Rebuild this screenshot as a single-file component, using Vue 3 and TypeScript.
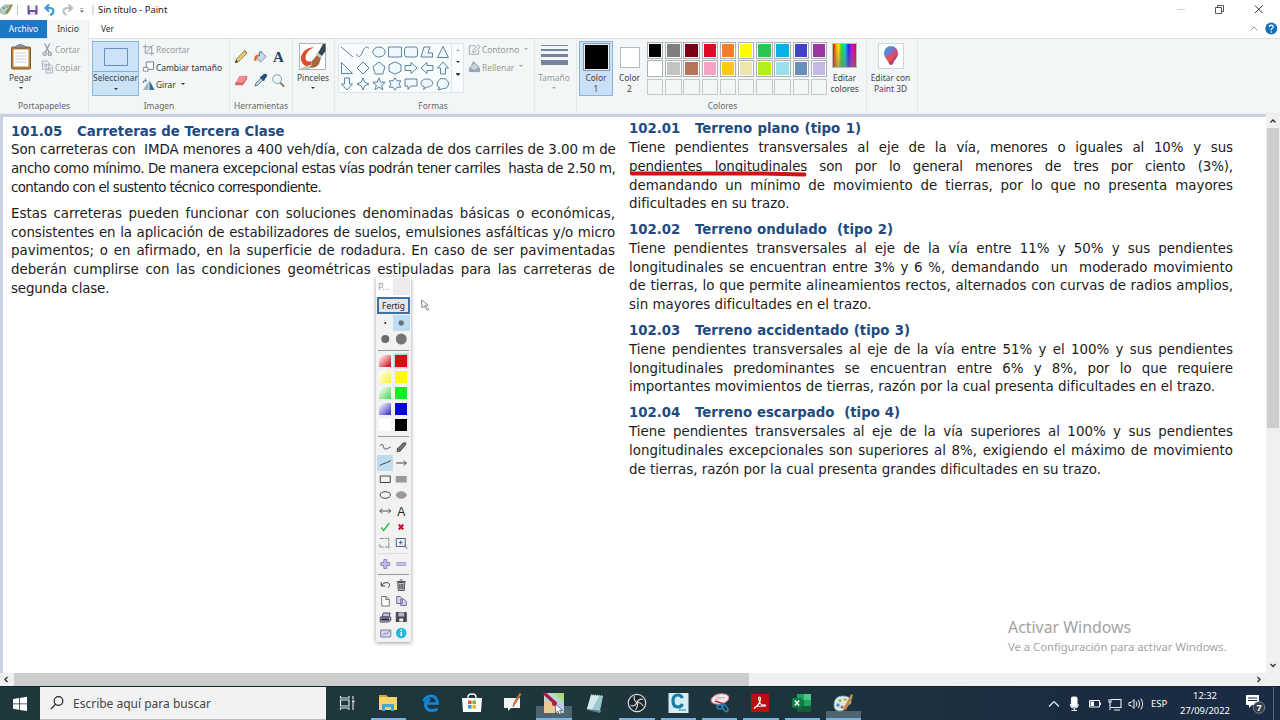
<script setup lang="ts">
interface Line { t: string; w?: number; ls?: number }
interface Section { no?: string; title?: string; tw?: number; lines: Line[] }

const leftSections: Section[] = [
  { no: '101.05', title: 'Carreteras de Tercera Clase', tw: 207, lines: [
    { t: 'Son carreteras con \u00a0IMDA menores a 400 veh/día, con calzada de dos carriles de 3.00 m de', ls: -0.08 },
    { t: 'ancho como mínimo. De manera excepcional estas vías podrán tener carriles \u00a0hasta de 2.50 m,', ls: -0.4 },
    { t: 'contando con el sustento técnico correspondiente.', w: 310, ls: -0.6 },
  ] },
  { lines: [
    { t: 'Estas carreteras pueden funcionar con soluciones denominadas básicas o económicas,' },
    { t: 'consistentes en la aplicación de estabilizadores de suelos, emulsiones asfálticas y/o micro', ls: -0.08 },
    { t: 'pavimentos; o en afirmado, en la superficie de rodadura. En caso de ser pavimentadas' },
    { t: 'deberán cumplirse con las condiciones geométricas estipuladas para las carreteras de' },
    { t: 'segunda clase.', w: 98, ls: -0.15 },
  ] },
]
const rightSections: Section[] = [
  { no: '102.01', title: 'Terreno plano (tipo 1)', tw: 166, lines: [
    { t: 'Tiene pendientes transversales al eje de la vía, menores o iguales al 10% y sus', ls: -0.08 },
    { t: 'pendientes longitudinales son por lo general menores de tres por ciento (3%),', ls: -0.12 },
    { t: 'demandando un mínimo de movimiento de tierras, por lo que no presenta mayores' },
    { t: 'dificultades en su trazo.', w: 160 },
  ] },
  { no: '102.02', title: 'Terreno ondulado \u00a0(tipo 2)', tw: 198, lines: [
    { t: 'Tiene pendientes transversales al eje de la vía entre 11% y 50% y sus pendientes' },
    { t: 'longitudinales se encuentran entre 3% y 6 %, demandando \u00a0un \u00a0moderado movimiento' },
    { t: 'de tierras, lo que permite alineamientos rectos, alternados con curvas de radios amplios,' },
    { t: 'sin mayores dificultades en el trazo.', w: 242 },
  ] },
  { no: '102.03', title: 'Terreno accidentado (tipo 3)', tw: 215, lines: [
    { t: 'Tiene pendientes transversales al eje de la vía entre 51% y el 100% y sus pendientes' },
    { t: 'longitudinales predominantes se encuentran entre 6% y 8%, por lo que requiere' },
    { t: 'importantes movimientos de tierras, razón por la cual presenta dificultades en el trazo.', w: 585 },
  ] },
  { no: '102.04', title: 'Terreno escarpado \u00a0(tipo 4)', tw: 205, lines: [
    { t: 'Tiene pendientes transversales al eje de la vía superiores al 100% y sus pendientes' },
    { t: 'longitudinales excepcionales son superiores al 8%, exigiendo el máximo de movimiento' },
    { t: 'de tierras, razón por la cual presenta grandes dificultades en su trazo.', w: 472 },
  ] },
]
const columns = [
  { cls: 'left', sections: leftSections },
  { cls: 'right', sections: rightSections },
]

const shapes: string[] = [
  'M2 3L14 13', 'M1.500 10C3 14 6 13 7.500 8S12 2 14 4.500', 'M1.800 8a6.200 5 0 1 0 12.400 0a6.200 5 0 1 0-12.400 0', 'M1.500 3h13v10h-13z', 'M4 3h8q2.500 0 2.500 2.500v5q0 2.500-2.500 2.500H4q-2.500 0-2.500-2.500v-5Q1.500 3 4 3z', 'M2 13L5 3h6L9 9h4.500v4z', 'M8 2.500l5.500 11h-11z',
  'M2.500 2.500v11h11z', 'M8 2l6 6-6 6-6-6z', 'M8 2l6 4.800L11.800 14H4.200L2 6.800z', 'M8 1.800l6 3v6.400l-6 3-6-3V4.800z', 'M2 5.500h6V2.500l6 5.500-6 5.500v-3H2z', 'M14 5.500H8V2.500L2 8l6 5.500v-3h6z', 'M5.500 14V8H2.500L8 2l5.500 6h-3v6z',
  'M5.500 2v6H2.500L8 14l5.500-6h-3V2z', 'M8 2l1.800 4.200L14 8l-4.200 1.800L8 14l-1.800-4.200L2 8l4.200-1.800z', 'M8 1.800l1.700 4.300 4.500.2-3.500 2.900 1.200 4.500L8 11.200l-3.900 2.500 1.200-4.500-3.500-2.900 4.500-.2z', 'M8 1.800l1.900 3h3.900L12 8l1.800 3.200H9.900l-1.900 3-1.900-3H2.200L4 8 2.200 4.800h3.900z', 'M2 3h12v7H8l-3 3.500V10H2z', 'M5.500 11C0 9.500 1 3 8 3s8 8 0 8L4.500 13.500z', 'M4 4.500Q5 1.500 8 2.800Q11 1.500 12 4.500Q15.500 7 13 10Q12 13 8.500 12.500L3 14L4.500 11.500Q1 11 2.500 8Q1 6 4 4.500z',
]

const palette: string[] = [
  '#000000', '#7f7f7f', '#790014', '#dc0a26', '#f67d28', '#fffb04', '#2cc551', '#0eade2', '#3f43c4', '#9b36a1',
  '#ffffff', '#c3c3c3', '#b47556', '#f4a2c6', '#fbcb13', '#ece5ac', '#b4ee1e', '#98dfe9', '#6b8fbb', '#c5b9e5',
  '', '', '', '', '', '', '', '', '', '',
]

const inks = [
  ['#c9000f', '#dc0a10'], ['#f8f12a', '#fffb00'], ['#3bd94a', '#08f41c'], ['#3128c8', '#0505dd'], ['#ffffff', '#000000'],
]

const tasks = [
  { id: 'view' }, { id: 'folder', run: true }, { id: 'edge' }, { id: 'store' }, { id: 'note' },
  { id: 'ruler', run: true, hot: true }, { id: 'pad' }, { id: 'obs', run: true }, { id: 'civil', run: true },
  { id: 'snip', run: true }, { id: 'pdf', run: true }, { id: 'excel', run: true }, { id: 'paint', run: true, low: true },
]
</script>

<template>
  <div class="screen">
    <header class="titlebar">
      <svg class="quick" width="92" height="20" viewBox="0 0 92 20">
        <path d="M1 8Q4 4 10 5Q12 9 8 13Q3 16 0 12z" fill="#b7cfc9" stroke="#829da3" stroke-width=".7" />
        <path d="M5 13L11 4l2 1-6 9z" fill="#9a8a50" /><circle cx="4" cy="8" r="1" fill="#658f52" /><circle cx="7" cy="7" r="1" fill="#c28967" />
        <path d="M17.500 5v10M93 5v10" stroke="#c4c4c4" />
        <path d="M27.500 5.500h10v9h-10z" fill="#71529a" /><path d="M29.500 5h6v5h-6z" fill="#f4f4fb" /><path d="M30 12h5v3h-5z" fill="#e3dff0" />
        <path d="M49 4.500L45.500 8l3.500 3.500M46 8H50Q54 8.500 53.300 12Q53 14 50 15" fill="none" stroke="#3a9bd0" stroke-width="2.200" />
        <path d="M68.500 4.500L72 8l-3.500 3.500M71.500 8h-4.500Q63 8.500 63.500 12Q64 14 66.500 15" fill="none" stroke="#b9bdc1" stroke-width="2.200" />
        <path d="M80 8.500h3.500" stroke="#999" stroke-width=".8" /><path d="M79.800 10.500h4L81.800 12.500z" fill="#555" />
      </svg>
      <span class="title">Sin título - Paint</span>
      <svg class="winbtns" width="110" height="20" viewBox="0 0 110 20" fill="none">
        <path d="M7 9.500h8" stroke="#ccc" />
        <path d="M45.500 7.500h6v6h-6zM47.500 7.500V5.500h6v6h-2" stroke="#444" stroke-width=".9" />
        <path d="M85 5.500l7.500 7.500M92.500 5.500L85 13" stroke="#333" />
      </svg>
    </header>

    <nav class="tabs">
      <span class="tab file">Archivo</span><span class="tab active">Inicio</span><span class="tab view">Ver</span>
      <svg class="help" width="30" height="18" viewBox="0 0 30 18">
        <path d="M.500 10.500L4 7l3.500 3.500" fill="none" stroke="#999" />
        <circle cx="21.300" cy="8.500" r="6" fill="#1470b8" />
        <path d="M19.300 7Q19.400 5.200 21.300 5.200T23.300 7Q23.200 8 21.300 9V10.200" fill="none" stroke="#fff" stroke-width="1.200" /><circle cx="21.300" cy="12" r=".8" fill="#fff" />
      </svg>
    </nav>

    <section class="ribbon">
      <div class="group g-clip">
        <div class="body">
          <div class="big paste">
            <svg width="24" height="28" viewBox="0 0 24 28">
              <rect x="2.500" y="4" width="19" height="22" rx="1" fill="#b9803b" stroke="#7e5c34" /><path d="M4.500 6.500h15v17h-15z" fill="#fff" />
              <path d="M6 10h11.500M6 13h11.500M6 16h11.500M6 19h11.500" stroke="#c6ccd5" /><path d="M6 5h11.500L15 2.500h-2a1.800 1.500 0 0 0-3.500 0H8z" fill="#8c9298" stroke="#555" stroke-width=".7" />
            </svg>
            <span>Pegar</span><i class="caret"></i>
          </div>
          <div class="rows">
            <div class="row dim">
              <svg width="13" height="14" viewBox="0 0 14 14" fill="none" stroke="#949ba5" stroke-width="1.300"><path d="M4 0l4.500 9M9.500 0L5 9" /><circle cx="4" cy="11" r="1.800" /><circle cx="9.500" cy="11" r="1.800" /></svg>
              <span>Cortar</span>
            </div>
            <div class="row dim">
              <svg width="13" height="14" viewBox="0 0 14 14" fill="#edf1f6" stroke="#a4adbb"><path d="M1.500.500h5l2 2v7h-7zM5.500 4.500h5l2 2v7h-7z" /><path d="M3 4h3M3 6h2M7 8.500h4M7 10.500h4" /></svg>
              <span>Copiar</span>
            </div>
          </div>
        </div>
        <span class="label">Portapapeles</span>
      </div>

      <div class="group g-image">
        <div class="body">
          <div class="big select">
            <svg width="46" height="30" viewBox="0 0 46 30"><path d="M11.500 6.500h23v17h-23z" fill="none" stroke="#6a8ac2" /><path d="M0 29.500h46" stroke="#7db1dd" /></svg>
            <span>Seleccionar</span><i class="caret"></i>
          </div>
          <div class="rows">
            <div class="row dim"><svg width="13" height="14" viewBox="0 0 14 14" fill="none" stroke="#8d97a6"><path d="M3.500 1v9.500H13M1 3.500h9.500V13M4 10L12 1.500" /></svg><span>Recortar</span></div>
            <div class="row"><svg width="13" height="14" viewBox="0 0 14 14"><path d="M4.500 1.500h8v8h-8z" fill="#fff" stroke="#667799" /><path d="M1.500 7.500h5v4h-5z" fill="#fff" stroke="#7c8da8" /></svg><span>Cambiar tamaño</span></div>
            <div class="row"><svg width="13" height="14" viewBox="0 0 14 14"><path d="M7 3v9.500H1z" fill="#9fb2c6" /><path d="M8 2l5.500 10.500H8z" fill="#356d9b" /><path d="M1 5Q1 2 4 2M3 0l2 2-2 2" fill="none" stroke="#3e6a95" /></svg><span>Girar</span><i class="caret"></i></div>
          </div>
        </div>
        <span class="label">Imagen</span>
      </div>

      <div class="group g-tools">
        <div class="body tools">
          <svg viewBox="0 0 16 16"><path d="M1.800 14.200l1-3.700 8.400-8.700 2.800 2.600-8.700 8.600z" fill="#efc96a" stroke="#796641" stroke-width=".8" /><path d="M1.500 14.500l.8-2.500 1.800 1.700zM11 1.800l2.800 2.600" fill="#222" stroke="#555" /></svg>
          <svg viewBox="0 0 16 16"><path d="M8.500 3l5.500 5-6 6-4.500-5z" fill="#c8dcec" stroke="#627f99" stroke-width=".9" /><path d="M1 12Q1 5 8 6.500Q4 7 3.500 13z" fill="#e4672b" /><path d="M7 8V3Q8 1 10 4" fill="none" stroke="#6e7e8e" /></svg>
          <svg viewBox="0 0 16 16"><text x="2" y="14" class="serif-a">A</text></svg>
          <svg viewBox="0 0 16 16"><path d="M6 3.500h8L9.500 12h-8z" fill="#f29195" stroke="#d4686e" stroke-width=".7" /><path d="M1.500 10h8l4.500-6v2.500L9.500 13h-8z" fill="#d9686e" /></svg>
          <svg viewBox="0 0 16 16"><path d="M2 14l1-3 6-6 2 2-6 6z" fill="#bcd7e6" stroke="#5f7381" /><path d="M8 4l4 4M9 5l3-3q2-1 2 1l-3 4z" fill="#27507b" stroke="#27507b" stroke-width="2" /></svg>
          <svg viewBox="0 0 16 16"><circle cx="6.500" cy="6.500" r="4.700" fill="#ecf5fa" stroke="#8698a6" /><path d="M9.800 10.300L14 14.500" stroke="#8e7159" stroke-width="2" /></svg>
        </div>
        <span class="label">Herramientas</span>
      </div>

      <div class="group g-brush">
        <div class="body">
          <div class="big">
            <svg width="28" height="28" viewBox="0 0 28 28"><path d="M.500.500h26v26H.500z" fill="#fff" stroke="#adb2b5" /><path d="M15 4Q3 8 3 15Q3 21 11 21L9 24Q5 22 5 22Q1 18 2 13Q5 5 15 4z" fill="#dd4e2b" /><path d="M15 4Q6 9 6.500 15Q7 20 13 18L12 22Q3 23 2.500 15Q3 6 15 4z" fill="#dd4e2b" /><path d="M1 26Q8 21 13 23L10 26H1z" fill="#c4c7c4" /><path d="M13 18l5-6 4 3-2 6Q16 26 11 24.500Q13 22 13 18z" fill="#a5683c" /><path d="M19 10l5-9h2.500v7L23 13z" fill="#354851" /><path d="M17.500 10.500l5 4" stroke="#c9c7ba" stroke-width="2.500" /></svg>
            <span>Pinceles</span><i class="caret"></i>
          </div>
        </div>
      </div>

      <div class="group g-shapes">
        <div class="body">
          <div class="gallery">
            <div class="shapes">
              <svg v-for="(s, i) in shapes" :key="i" viewBox="0 0 16 16"><path :d="s" :fill="i < 2 ? 'none' : '#eef8fd'" stroke="#426d8c" stroke-width=".85" /></svg>
            </div>
            <div class="scroll3"><i class="up"></i><i class="caret"></i><b><i class="caret"></i></b></div>
          </div>
          <div class="rows">
            <div class="row dim"><svg width="13" height="14" viewBox="0 0 14 14" fill="none" stroke="#9ea5ad"><path d="M8 2.500H1.500v9h10V7M5 9.500l1-3 5.500-5 1.500 2L7.500 9z" /></svg><span>Contorno</span><i class="caret"></i></div>
            <div class="row dim"><svg width="13" height="14" viewBox="0 0 14 14"><path d="M1 8h12v4.500H1z" fill="#98a7bc" /><path d="M6 2l6 5-5 4-5-3z" fill="#cad2df" stroke="#929fb2" /><path d="M5 5Q5-1 8 3" fill="none" stroke="#929fb2" /></svg><span>Rellenar</span><i class="caret"></i></div>
          </div>
        </div>
        <span class="label">Formas</span>
      </div>

      <div class="group g-size">
        <div class="body"><div class="big dim">
          <svg width="28" height="28" viewBox="0 0 28 28" stroke="#7785a3"><path d="M1 4.500h27" /><path d="M1 9h27" stroke-width="2" /><path d="M1 14.500h27" stroke-width="3" /><path d="M1 21.500h27" stroke-width="5" /></svg>
          <span>Tamaño</span><i class="caret"></i>
        </div></div>
      </div>

      <div class="group g-colors">
        <div class="body">
          <div class="big c1"><em class="swatch black"></em><span>Color</span><span>1</span></div>
          <div class="big c2"><em class="swatch white"></em><span>Color</span><span>2</span></div>
          <div class="palette"><i v-for="(c, i) in palette" :key="i" :class="{ empty: !c }" :style="c ? { backgroundColor: c } : undefined"></i></div>
          <div class="big edit"><em class="rainbow"></em><span>Editar</span><span>colores</span></div>
        </div>
        <span class="label">Colores</span>
      </div>

      <div class="group g-3d">
        <div class="body"><div class="big">
          <svg width="26" height="26" viewBox="0 0 26 26">
            <defs><linearGradient id="drop" x1="0" y1="0" x2=".8" y2="1"><stop offset="0" stop-color="#16b1e8" /><stop offset=".4" stop-color="#7776cf" /><stop offset=".65" stop-color="#e64862" /><stop offset="1" stop-color="#5c2aa3" /></linearGradient></defs>
            <path d="M.500.500h25v25H.500z" fill="#fff" stroke="#d3d5d7" /><path d="M13 3a7 7 0 0 1 7 7q0 4-4 8q-1 4-3 4t-3-4q-4-4-4-8a7 7 0 0 1 7-7z" fill="url(#drop)" /><path d="M7 12q6 5 8-2l1 3-3 6h-3z" fill="#ef543d" opacity=".7" />
          </svg>
          <span>Editar con</span><span>Paint 3D</span>
        </div></div>
      </div>
    </section>

    <main class="work">
      <div class="canvas">
        <div v-for="col in columns" :key="col.cls" class="col" :class="col.cls">
          <article v-for="(s, i) in col.sections" :key="i">
            <h2 v-if="s.title"><span class="num">{{ s.no }}</span><span class="just" :style="{ width: s.tw + 'px' }">{{ s.title }}</span></h2>
            <p v-for="l in s.lines" :key="l.t" class="just" :style="{ width: (l.w ?? 604) + 'px', letterSpacing: (l.ls ?? 0) + 'px' }">{{ l.t }}</p>
          </article>
        </div>
        <svg class="stroke" width="180" height="8" viewBox="0 0 180 8"><path d="M3 3.500h129L175.500 4.500" fill="none" stroke="#cf1116" stroke-width="4" stroke-linecap="round" stroke-linejoin="round" /></svg>
        <div class="activate"><strong>Activar Windows</strong><span>Ve a Configuración para activar Windows.</span></div>
      </div>
      <div class="vbar">
        <svg width="14" height="14" viewBox="0 0 14 14"><path d="M4.500 8.500L7 6l2.500 2.500" /></svg>
        <div class="thumb"></div>
        <svg width="14" height="14" viewBox="0 0 14 14"><path d="M4.500 5L7 7.500 9.500 5" /></svg>
      </div>
    </main>
    <div class="hbar">
      <svg width="14" height="13" viewBox="0 0 14 13"><path d="M7.500 4L5 6.500 7.500 9" /></svg>
      <div class="thumb"></div>
      <svg width="14" height="13" viewBox="0 0 14 13"><path d="M5.500 4L8 6.500 5.500 9" /></svg>
    </div>

    <footer class="taskbar">
      <div class="start"><svg width="16" height="16" viewBox="0 0 16 16" fill="#fff"><path d="M1 3l6-1v5.500H1zM7.800 1.900L15 .800v6.700H7.800zM1 8.300h6v5.500l-6-1zM7.800 8.300H15v6.700l-7.200-1.100z" /></svg></div>
      <div class="search"><svg width="16" height="16" viewBox="0 0 16 16" fill="none" stroke="#222" stroke-width="1.200"><circle cx="9.500" cy="6" r="4.300" /><path d="M6.500 9.200L2 14" /></svg><span>Escribe aquí para buscar</span></div>
      <div v-for="t in tasks" :key="t.id" class="task" :class="{ run: t.run, hot: t.hot, low: t.low }">
        <svg width="24" height="24" viewBox="0 0 24 24">
          <g v-if="t.id === 'view'" fill="none" stroke="#e8eeee" stroke-width="1.100"><path d="M5.500 9h8.500v6h-8.500zM5.500 5v2h8.500V5M5.500 19v-2h8.500v2M18 5v3.500M18 12v7" /><path d="M17 10.500h2.500" stroke-width="2" /></g>
          <g v-else-if="t.id === 'folder'"><path d="M3 4h7l2 2h9v13H3z" fill="#f5d36c" /><path d="M3 4h7l1 2H3z" fill="#dba82e" /><path d="M6 20v-7h12v7h-3v-4h-6v4z" fill="#4aa5cb" /></g>
          <g v-else-if="t.id === 'edge'"><path d="M5.500 10.500Q8 5 13 5Q18.500 5 19.500 12" fill="none" stroke="#1684d5" stroke-width="3" /><path d="M9 12.500H21" stroke="#1684d5" stroke-width="2.600" /><path d="M12 8Q7.500 10 7.500 14Q8 19.500 14 19.500Q17 19.500 19.500 18" fill="none" stroke="#1684d5" stroke-width="3" /></g>
          <g v-else-if="t.id === 'store'"><path d="M9 8V6q0-3 4-3t4 3v2" fill="none" stroke="#fff" stroke-width="1.300" /><path d="M3 7h20l-1 14H4z" fill="#fff" /><path d="M9 9.500h3.600v3.600H9z" fill="#e9532f" /><path d="M13.400 9.500H17v3.600h-3.600z" fill="#80b53a" /><path d="M9 14h3.600v3.600H9z" fill="#2d9ed8" /><path d="M13.400 14H17v3.600h-3.600z" fill="#f4b81d" /></g>
          <g v-else-if="t.id === 'note'"><path d="M3 7h16v10h-9l-3 3v-3H3z" fill="#f3f5f5" /><path d="M20.500 3L14 13l-2 3 .5-3.500L18.500 2z" fill="#d77b35" stroke="#8b4a2b" stroke-width=".5" /></g>
          <g v-else-if="t.id === 'ruler'"><path d="M2 2h20v20H2z" fill="#b8d9cf" /><path d="M12 2h10v10z" fill="#a8da80" /><path d="M2 9l10 4 1 9H2z" fill="#ebc996" /><path d="M14 12h8v10h-9z" fill="#b9ccef" /><path d="M2 2l11 10" stroke="#a01e47" stroke-width="3.500" /><circle cx="12.500" cy="12.500" r="2.500" fill="#c51535" /><path d="M13.500 13v9l2.300-2 1.500 3.500 2-1-1.600-3h3z" fill="#fff" stroke="#333" stroke-width=".6" /></g>
          <g v-else-if="t.id === 'pad'"><path d="M8 4l12 1-3 15-13-2z" fill="#9ac8ce" /><path d="M8 4l8 1-7 13.500-5-.5z" fill="#d6eaeb" /><path d="M4 18l13 2 2-1-2 3-13-3z" fill="#538894" /><path d="M8 4l12 1" stroke="#bed0ce" stroke-width="1.500" stroke-dasharray="1 1" /></g>
          <g v-else-if="t.id === 'obs'" fill="none" stroke="#dae0e1"><circle cx="12" cy="12" r="8.700" fill="#1b2328" stroke-width="1.200" /><path d="M9.500 5Q8 9 12 11.500Q16 11 18 15M18 8.500Q14 7 12 11.500Q13.500 15 10.500 19M5.500 14.500Q10 16 12 11.500" stroke-width="1.100" /></g>
          <g v-else-if="t.id === 'civil'"><path d="M2.500 2h20v20h-20z" fill="#d6edf6" /><path d="M16.500 7Q15 4 12 4Q7 4 7 10t5 6Q15 16 16.500 13" fill="none" stroke="#197da3" stroke-width="3.200" /><path d="M13 19h7" stroke="#53a5c3" stroke-width="2" stroke-dasharray="1.800 .6" /></g>
          <g v-else-if="t.id === 'snip'"><ellipse cx="12" cy="8" rx="9" ry="5" fill="#f5e7ea" stroke="#dc8088" transform="rotate(-12 12 8)" /><path d="M7 9l9-3M8 6l9 1" stroke="#b7bdc8" /><path d="M7 10l9 3" stroke="#d22540" stroke-width="1.500" /><g fill="none" stroke="#2784b5" stroke-width="1.600"><ellipse cx="12" cy="16" rx="3" ry="2" /><ellipse cx="17" cy="17" rx="2" ry="4" transform="rotate(-35 17 17)" /></g></g>
          <g v-else-if="t.id === 'pdf'"><rect x="2" y="3" width="18" height="18" rx="1" fill="#b90f0f" /><path d="M10.500 6Q12 6 11 10T5.500 17Q5 18 6 16.500T16.500 15Q17 13.500 14 14T9.500 7Q9.500 6 10.500 6z" fill="none" stroke="#fff" stroke-width="1.200" /></g>
          <g v-else-if="t.id === 'excel'"><path d="M7 3h14v18H7z" fill="#21a366" /><path d="M14 3h7v6h-7z" fill="#4bc887" /><path d="M7 9h7v6H7z" fill="#107c41" /><path d="M7 15h14v6H7z" fill="#185c37" /><rect x="2" y="7" width="10" height="10" rx="1" fill="#107c41" /><path d="M4.800 9.500l4.400 5M9.200 9.500l-4.400 5" stroke="#fff" stroke-width="1.500" /></g>
          <g v-else><path d="M2 14Q2 5 11 5Q19 5 19 11Q19 14 15 14Q13 20 8 20Q2 20 2 14z" fill="#dce8e8" stroke="#89abb5" stroke-width=".7" /><circle cx="6" cy="14" r="1.700" fill="#3795c5" /><circle cx="8" cy="9.500" r="1.600" fill="#86b94c" /><circle cx="13" cy="8.500" r="1.600" fill="#e2a238" /><circle cx="10" cy="16" r="1.500" fill="#d4554a" /><path d="M11 18L17 7l2-4 2 1-1 4-6 11z" fill="#bd8a4d" /></g>
        </svg>
      </div>
      <div class="tray">
        <svg width="98" height="24" viewBox="0 0 98 24" fill="none" stroke="#edf1f4" stroke-width="1.200">
          <path d="M1 14.500l5-5 5 5" /><rect x="23.500" y="5" width="5.500" height="9.500" rx="1.500" fill="#fff" /><path d="M22.500 12q0 4 3.800 4t3.800-4M26.300 16v2.500M23.500 18.500h5.500" />
          <path d="M41.500 8.500h10v6.500h-10zM52.500 10.500v2.500" stroke-width="1" /><path d="M42.500 9.500h3.500v4.500h-3.500z" fill="#fff" stroke="none" />
          <path d="M63 7.500h10v8H63M62 10.500V18M66 18h6M61 7v3h2V7" stroke-width="1.100" />
          <path d="M81 10.500h2l3-3v9l-3-3h-2zM88 9.500q1.800 2.500 0 5M90.500 8q2.500 4 0 8M92.800 6.500q3.700 5.500 0 11" stroke-width="1" />
        </svg>
        <span class="lang">ESP</span>
        <span class="clock"><span>12:32</span><span>27/09/2022</span></span>
        <svg class="notif" width="24" height="24" viewBox="0 0 24 24"><path d="M2 3h13v10H8l-3 3v-3H2z" fill="#fff" /><path d="M4 6h9M4 8.500h9" stroke="#1b2c42" /><circle cx="15" cy="15.500" r="5.800" fill="#36404a" stroke="#87919b" stroke-width=".8" /><text x="15" y="19" text-anchor="middle" class="seven">7</text></svg>
        <i class="edge"></i>
      </div>
    </footer>

    <aside class="pen">
      <div class="pen-title"><span>P...</span><i></i></div>
      <div class="fertig">Fertig</div>
      <div class="grid2">
        <svg viewBox="0 0 16 16"><circle cx="8" cy="8" r="1" fill="#222" /></svg>
        <svg class="on" viewBox="0 0 16 16"><circle cx="8" cy="8" r="2.700" fill="#667582" /></svg>
        <svg viewBox="0 0 16 16"><circle cx="8" cy="8" r="4" fill="#6b6b68" /></svg>
        <svg viewBox="0 0 16 16"><circle cx="8" cy="8" r="5.500" fill="#767673" /></svg>
      </div>
      <hr />
      <div class="grid2 inks">
        <template v-for="(p, i) in inks" :key="i"><b :style="{ background: `linear-gradient(135deg, #fff 5%, ${p[0]})` }"></b><b :class="{ picked: i === 0 }" :style="{ background: p[1] }"></b></template>
      </div>
      <hr />
      <div class="grid2">
        <svg viewBox="0 0 16 16"><path d="M2.500 7Q5 3.500 6 7Q6.500 11 9 10T13.500 8" stroke-width=".8" /></svg>
        <svg viewBox="0 0 16 16"><path d="M4 10l6-6q4-1 2 2l-5 6z" fill="#777" /><path d="M4 10l3 2-3 1z" fill="#fff" /></svg>
        <svg class="on" viewBox="0 0 16 16"><path d="M2.500 10.500l3-1.500 4-1.500 4-2" /></svg>
        <svg viewBox="0 0 16 16"><path d="M3 8h10M10.500 5.500L13 8l-2.500 2.500" /></svg>
        <svg viewBox="0 0 16 16"><path d="M3 5h10v6.500H3z" /></svg>
        <svg viewBox="0 0 16 16"><path d="M2.500 5h11v6.500h-11z" fill="#9a9a9a" stroke="none" /></svg>
        <svg viewBox="0 0 16 16"><ellipse cx="8" cy="8" rx="5.200" ry="3.300" /></svg>
        <svg viewBox="0 0 16 16"><ellipse cx="8" cy="8" rx="5" ry="3.200" fill="#999" stroke="#999" /></svg>
        <svg viewBox="0 0 16 16"><path d="M2.500 8h11M5 5.500L2.500 8 5 10.500M11 5.500L13.500 8 11 10.500" stroke-width=".9" /></svg>
        <svg viewBox="0 0 16 16"><text x="8" y="12.500" text-anchor="middle" class="letter">A</text></svg>
        <svg viewBox="0 0 16 16"><path d="M4 8.500l2.500 3L12 4" stroke="#32bd45" stroke-width="1.400" /></svg>
        <svg viewBox="0 0 16 16"><path d="M5.500 5.500l4.500 5M10 5.500l-4.500 5" stroke="#c9102a" stroke-width="2" /></svg>
        <svg viewBox="0 0 16 16"><path d="M2.500 3.500h8M2.500 12h11M11.500 2.500v11M2.500 9v3" stroke="#777" stroke-width=".8" stroke-dasharray="4 1" /></svg>
        <svg viewBox="0 0 16 16"><path d="M3 3.500h9v8H3zM5.500 7.500h4M7.500 5.500v4M11 11l3 2.500" stroke="#496080" /></svg>
      </div>
      <hr class="soft" />
      <div class="grid2">
        <svg viewBox="0 0 16 16"><path d="M6.500 3.500h3v3h3v3h-3v3h-3v-3h-3v-3h3z" fill="#bdbbea" stroke="#7a7aaf" stroke-width=".8" /></svg>
        <svg viewBox="0 0 16 16"><path d="M3.500 6.500h9v3h-9z" fill="#c3c0ed" stroke="#9b9bc6" stroke-width=".8" /></svg>
      </div>
      <hr class="tight" />
      <div class="grid2">
        <svg viewBox="0 0 16 16"><path d="M4 5v4h4M4 9q2-4 6-3.500Q14 7 11 10.500" /></svg>
        <svg viewBox="0 0 16 16"><path d="M4.500 5.500h7l-.5 8H5zM3.500 4.500h9M6.500 3h3M6.500 7v5M8 7v5M9.500 7v5" stroke="#555566" fill="#bbb" /></svg>
        <svg viewBox="0 0 16 16"><path d="M4.500 3.500h4.500l3 3v6.500h-7.500zM8.500 3.500v3h3" fill="#fff" stroke="#666" stroke-width=".9" /></svg>
        <svg viewBox="0 0 16 16"><path d="M3.500 3.500h3.500l2 2v5h-5.500zM7.500 6h3l2.500 2.500v4H7.500z" fill="#d5d3f2" stroke="#666691" stroke-width=".9" /></svg>
        <svg viewBox="0 0 16 16"><path d="M6 4h7l-1.500 4H5zM3 8h10.500v3.500L11 13H3z" fill="#c8c6e4" stroke="#454566" /><path d="M4 10.500h8" stroke="#222" stroke-width="2" /></svg>
        <svg viewBox="0 0 16 16"><path d="M3 3.500h10v9H3z" fill="#444455" /><path d="M5 3.500h6v4H5z" fill="#b5b5d0" stroke="none" /><path d="M6 9.500h4v3H6z" fill="#eee" stroke="none" /></svg>
        <svg viewBox="0 0 16 16"><path d="M3.500 5h10v7h-10zM6 10l2-2 1.500 1 2.500-3" fill="#d6d6f1" stroke="#7c7ca8" /></svg>
        <svg viewBox="0 0 16 16"><circle cx="8" cy="8" r="5.300" fill="#25b9e2" stroke="#3287a4" /><path d="M8 7v4M8 4.500v1.500" stroke="#fff" stroke-width="1.500" /></svg>
      </div>
    </aside>
    <svg class="pointer" width="12" height="16" viewBox="0 0 12 16"><path d="M1.500 2l6.500 5-3 .5 4 4-1.500 1-3.500-4.500L2 10z" fill="#fff" stroke="#777" stroke-width=".9" /></svg>
  </div>
</template>

<style>
html, body { margin: 0; overflow: hidden; }
</style>
<style scoped>
* { box-sizing: border-box; }
.screen { position: relative; width: 1280px; height: 720px; overflow: hidden; display: flex; flex-direction: column; background: #fff; font-family: "Noto Sans", "Open Sans", sans-serif; font-size: 8.4px; color: #333; white-space: nowrap; }
svg { display: block; flex: none; }
.titlebar { height: 20px; display: flex; align-items: center; flex: none; }
.title { margin-left: 6px; font-size: 9.4px; line-height: 18px; color: #222; }
.quick { overflow: visible; }
.winbtns { margin-left: auto; }
.tabs { height: 19px; flex: none; display: flex; border-bottom: 1px solid #dcdedf; line-height: 18px; }
.tab { text-align: center; }
.tab.file { width: 47px; background: #1b78c4; color: #fff; }
.tab.active { width: 42px; background: #f4f7f7; border: 1px solid #e6e9ea; border-top: 0; border-bottom: 0; height: 19px; line-height: 18px; }
.tab.view { width: 37px; }
.help { margin-left: auto; margin-right: 0; }
.ribbon { height: 75px; flex: none; display: flex; background: #f3f6f6; border-bottom: 1px solid #e7ebec; }
.group { display: flex; flex-direction: column; justify-content: space-between; border-right: 1px solid #e4e8e9; padding: 2px 0 0; height: 74px; }
.body { display: flex; height: 56px; }
.label { text-align: center; line-height: 14px; color: #666; }
.big { display: flex; flex-direction: column; align-items: center; line-height: 11px; color: #444; }
.big span { line-height: 11px; }
.caret { width: 0; height: 0; border: 2.5px solid transparent; border-top-color: #333; border-bottom: 0; flex: none; }
.big .caret { margin-top: 4px; }
.dim, .dim span { color: #999; }
.dim .caret { border-top-color: #aaa; }
.rows { display: flex; flex-direction: column; }
.row { display: flex; align-items: center; height: 17.5px; gap: 1px; }
.row .caret { margin-left: 4px; margin-top: -2px; }
.g-clip { width: 89px; }
.g-clip .big { width: 41px; padding-top: 2px; }
.g-clip .big span { margin-top: 1px; }
.g-image { width: 141px; padding-left: 3px; }
.select { width: 47px; height: 55px; background: #cbe2f7; border: 1px solid #88b8df; }
.select .caret { margin-top: 5px; }
.g-image .rows { margin-left: 3px; }
.g-image .label { margin-right: 3px; }
.g-tools { width: 63px; }
.tools { display: grid; grid-template-columns: repeat(3, 18.5px); grid-template-rows: 23.5px 23.5px; align-items: center; padding: 4px 0 0 4px; align-content: start; }
.tools svg { width: 15px; height: 15px; }
.serif-a { font: bold 16px "Liberation Serif", serif; fill: #2b405a; }
.g-brush { width: 42px; }
.g-brush .big { width: 40px; padding-top: 2px; }
.g-brush .big span { margin-top: 1px; }
.g-shapes { width: 200px; padding-left: 3px; }
.g-shapes .label { margin-right: 6px; }
.gallery { display: flex; width: 126px; height: 50px; margin-top: 2px; border: 1px solid #dfe5e9; background: #f9fcfd; }
.shapes { display: grid; grid-template-columns: repeat(7, 16px); grid-template-rows: repeat(3, 16px); margin-top: -.5px; }
.shapes svg { width: 16px; height: 16px; }
.scroll3 { width: 12px; border-left: 1px solid #dfe5e9; display: flex; flex-direction: column; align-items: center; justify-content: space-around; }
.scroll3 .up { border: 2px solid transparent; border-top: 0; border-bottom-color: #aaa; }
.scroll3 b { border-top: 1px solid #444; padding-top: 2px; }
.g-shapes .rows { margin-left: 4px; }
.g-size { width: 42px; }
.g-size .big { width: 38px; }
.g-size .big span { margin-top: 3px; }
.g-colors { width: 290px; padding-left: 2px; }
.c1 { width: 34px; height: 55px; background: #cbe0f7; border: 1px solid #86b5dd; }
.c2 { width: 33px; height: 55px; border: 1px solid transparent; }
.swatch { width: 27px; height: 28px; margin: 1px 0 2px; border: 1px solid #8a98a7; }
.swatch.black { background: #000; box-shadow: inset 0 0 0 1px #eaf0f6; }
.swatch.white { width: 20px; height: 21px; margin: 5px 0; background: #fff; border-color: #b5b9bd; }
.c1 span, .c2 span { position: relative; top: -1px; }
.palette { display: grid; grid-template-columns: repeat(10, 16.4px); grid-template-rows: repeat(3, 16.5px); column-gap: 1.8px; row-gap: 1.8px; margin: 1px 0 0 1px; align-content: start; }
.palette i { border: 1px solid #aeb1b3; box-shadow: inset 0 0 0 1px #fff; }
.palette .empty { border-color: #c5c8c9; box-shadow: none; }
.edit { width: 35px; padding-top: 2px; }
.rainbow { width: 25px; height: 25px; margin-bottom: 4px; border: 1px solid #bbb; background: linear-gradient(transparent 0%, #7779 100%), linear-gradient(90deg, #e00, #fa0 14%, #fe0 24%, #2d2 38%, #0de 52%, #22e 67%, #d0d 84%, #e02); }
.g-3d { width: 51px; padding-left: 0; }
.g-3d .big { width: 47px; padding-top: 2px; }
.g-3d .big svg { margin-bottom: 3px; }

.work { height: 559px; flex: none; display: flex; background: #c7d1df; }
.canvas { position: relative; width: 1263px; height: 556px; margin: 3px 0 0 3px; background: #fff; display: flex; }
.col { width: 604px; font: 13.4px/18.75px "DejaVu Sans", Verdana, sans-serif; color: #1b1b1b; font-variant-ligatures: none; }
.col.left { margin: 5.7px 0 0 8px; }
.col.right { margin: 3.3px 0 0 14px; }
.col p, .col h2 { margin: 0; height: 18.75px; }
.col article { margin-bottom: 7.2px; }
.col h2 { display: flex; font-size: 13.3px; font-weight: bold; color: #214a80; }
.num { width: 66px; }
.just { display: block; text-align: justify; text-align-last: justify; }
.stroke { position: absolute; left: 626px; top: 53px; }
.activate { position: absolute; left: 1005px; top: 500px; display: flex; flex-direction: column; color: #a3a3a3; }
.activate strong { font-weight: normal; font-size: 15.9px; line-height: 21px; }
.activate span { font-size: 11.25px; line-height: 18px; }
.vbar { width: 14px; height: 559px; background: #f0f0f0; display: flex; flex-direction: column; }
.vbar svg, .hbar svg { fill: none; stroke: #333; stroke-width: 1.4; }
.vbar .thumb { width: 12px; height: 300px; margin: 0 1px auto; background: #cdcdcd; }
.hbar { height: 13px; flex: none; display: flex; background: #f0f0f0; }
.hbar .thumb { width: 735px; height: 13px; background: #cdcdcd; margin-right: 503px; }

.taskbar { height: 34px; flex: none; display: flex; background: linear-gradient(90deg, #20373c, #1d343c 60%, #1a2b40 85%, #1b2b45); border-top: 1px solid #14252b; }
.start { width: 40px; display: flex; align-items: center; justify-content: center; }
.search { width: 286.4px; height: 33px; background: #f2f2f2; display: flex; align-items: center; padding-left: 9px; border-bottom: 1px solid #bbb; }
.search span { margin-left: 8px; font-size: 12px; color: #444; }
.task { width: 41.4px; display: flex; justify-content: center; padding-top: 4px; position: relative; }
.task svg { position: relative; z-index: 1; }
.task.run::after { content: ""; position: absolute; left: 3px; right: 3px; bottom: 0; height: 2px; background: #76b3e4; }
.task.hot::before, .task.low::before { content: ""; position: absolute; left: 3px; right: 3px; bottom: 2px; height: 12px; background: #4f656d; }
.task.low::before { height: 7px; }
.tray { margin-left: auto; display: flex; align-items: center; color: #fff; width: 232px; }
.lang { margin-left: 5px; width: 20px; font-size: 9.6px; }
.clock { width: 60px; margin-left: 4px; display: flex; flex-direction: column; align-items: center; font-size: 9.4px; line-height: 15px; margin-top: -1px; }
.notif { margin-left: 9px; }
.tray .edge { width: 1px; height: 33px; margin-left: 5px; background: #59677a; }
.seven { font: bold 9px "Noto Sans", sans-serif; fill: #fff; }

.pen { position: absolute; left: 376px; top: 277px; width: 35px; height: 365px; background: #f2f2f2; box-shadow: 0 1px 4px #0006; }
.pen-title { height: 20px; display: flex; background: #fff; padding: 1px 1px 2px 2px; color: #999; }
.pen-title span { width: 14px; line-height: 17px; font-size: 9px; }
.pen-title i { width: 17px; background: #ececec; margin-left: auto; }
.fertig { margin: 0 1px; height: 17px; border: 2px solid #3e72a7; background: #e4e5e7; text-align: center; font-size: 8.4px; line-height: 14px; color: #222; }
.grid2 { display: grid; grid-template-columns: 16.5px 16.5px; grid-auto-rows: 16px; padding-left: .5px; }
.fertig + .grid2 { margin-top: 1px; }
.grid2 svg { width: 16.5px; height: 16px; fill: none; stroke: #444; stroke-width: 1; }
.grid2 svg circle { stroke: none; }
.grid2 svg text { stroke: none; fill: #222; }
.grid2 .on { background: #c0dcf1; }
.letter { font: 12px "Liberation Sans", sans-serif; }
.inks b { width: 12px; height: 12px; margin: 2px; }
.inks .picked { box-shadow: 0 0 0 1.5px #bcd3e5; }
.pen hr { height: 1px; border: 0; background: #999; margin: 3px 2px 2px; }
.pen hr.soft { background: #ddd; margin: 2px; }
.pen hr.tight { margin: 2px; }
.pointer { position: absolute; left: 420px; top: 298px; }
</style>
